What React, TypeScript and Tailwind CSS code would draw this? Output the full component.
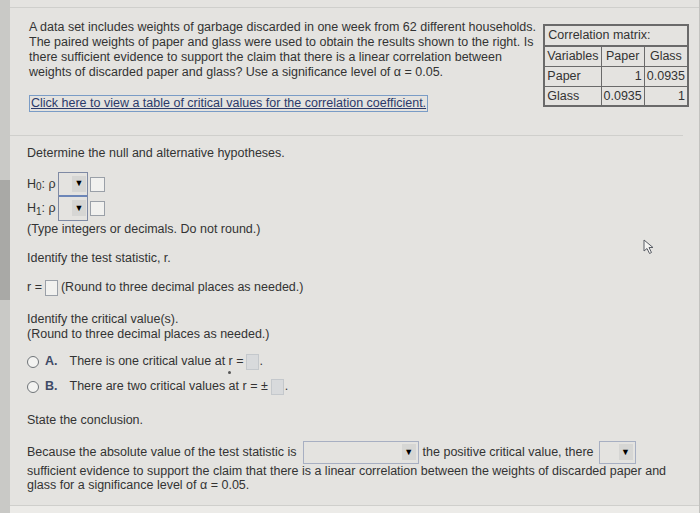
import React from 'react';

function Arrow() {
  return (
    <span className="flex h-full w-[14px] items-center justify-center bg-[#d6d6d4] text-[9px] leading-none text-black">
      ▼
    </span>
  );
}

function Blank({ className = '' }: { className?: string }) {
  return <span className={`inline-block border border-[#9aa0a8] bg-[#f1f1ef] ${className}`} />;
}

function Radio({ letter, children }: { letter: string; children: React.ReactNode }) {
  return (
    <div className="flex items-center">
      <span className="mr-[6px] inline-block h-[12px] w-[12px] rounded-full border border-[#6f7478] bg-[#f3f3f1]" />
      <span className="mr-[12px] font-bold text-[#3f4a66]">{letter}.</span>
      {children}
    </div>
  );
}

function Hyp({ n }: { n: string }) {
  return (
    <span className="whitespace-nowrap">
      H<sub className="text-[10px]">{n}</sub>: ρ
    </span>
  );
}

export default function App() {
  return (
    <div
      className="flex h-[513px] w-[700px] overflow-hidden bg-[#e4e3e0] text-[12.5px] text-[#333]"
      style={{ fontFamily: '"Liberation Sans", Arial, sans-serif' }}
    >
      {/* left edge of the screen */}
      <div className="flex w-[10px] flex-col bg-[#c9c9c6]">
        <div className="mt-[180px] h-[120px] bg-[#a9a9a6]" />
      </div>

      <div className="flex flex-1 flex-col border-r border-[#c2c2bf]">
        <div className="mt-[7px] border-t border-[#cfcfcc]" />

        {/* problem statement */}
        <div className="flex pl-[19px] pr-[10px] pt-[12px]">
          <div className="w-[510px]">
            <p className="leading-[15px]">
              A data set includes weights of garbage discarded in one week from 62 different households.
              The paired weights of paper and glass were used to obtain the results shown to the right. Is
              there sufficient evidence to support the claim that there is a linear correlation between
              weights of discarded paper and glass? Use a significance level of α = 0.05.
            </p>
            <div className="mt-[15px] inline-block border border-[#7a9cc6] px-[1px] leading-[15px] text-[#2b3a6a] underline">
              Click here to view a table of critical values for the correlation coefficient.
            </div>
          </div>

          <table className="ml-auto mt-[4px] h-[80px] border-collapse border-2 border-[#6a6a6a] text-[12.5px]">
            <tbody>
              <tr className="h-[20px]">
                <td colSpan={3} className="border-2 border-[#6a6a6a] px-[3px]">Correlation matrix:</td>
              </tr>
              <tr className="h-[20px]">
                <td className="w-[55px] border border-[#6a6a6a] px-[2px]">Variables</td>
                <td className="w-[43px] border border-[#6a6a6a] px-[2px] text-center">Paper</td>
                <td className="w-[42px] border border-[#6a6a6a] px-[2px] text-center">Glass</td>
              </tr>
              <tr className="h-[20px]">
                <td className="border border-[#6a6a6a] px-[2px]">Paper</td>
                <td className="border border-[#6a6a6a] px-[2px] text-right">1</td>
                <td className="border border-[#6a6a6a] px-[2px]">0.0935</td>
              </tr>
              <tr className="h-[19px]">
                <td className="border border-[#6a6a6a] px-[2px]">Glass</td>
                <td className="border border-[#6a6a6a] px-[2px]">0.0935</td>
                <td className="border border-[#6a6a6a] px-[2px] text-right">1</td>
              </tr>
            </tbody>
          </table>
        </div>

        <div className="mr-[16px] mt-[22px] border-t border-[#cfcfcc]" />

        {/* answer area */}
        <div className="relative flex flex-col pl-[17px] pt-[10px] leading-[15px]">
          <p>Determine the null and alternative hypotheses.</p>

          <div className="mt-[11px] flex">
            <div className="flex w-[31px] flex-col">
              <div className="flex h-[25px] items-center"><Hyp n="0" /></div>
              <div className="flex h-[24px] items-center"><Hyp n="1" /></div>
            </div>
            <div className="flex w-[30px] flex-col border border-[#7f8aa4]">
              <div className="flex h-[24px] items-center justify-end border-b-2 border-[#6c86b8] pr-[1px]">
                <span className="h-[16px]"><Arrow /></span>
              </div>
              <div className="flex h-[23px] items-center justify-end pr-[1px]">
                <span className="h-[16px]"><Arrow /></span>
              </div>
            </div>
            <div className="ml-[2px] flex flex-col">
              <div className="flex h-[25px] items-center"><Blank className="h-[15px] w-[15px]" /></div>
              <div className="flex h-[24px] items-center"><Blank className="h-[15px] w-[15px]" /></div>
            </div>
          </div>

          <p className="mt-[1px]">(Type integers or decimals. Do not round.)</p>

          <p className="mt-[14px]">Identify the test statistic, r.</p>

          <div className="mt-[14px] flex items-center">
            <span>r =</span>
            <Blank className="ml-[3px] h-[16px] w-[13px]" />
            <span className="ml-[3px]">(Round to three decimal places as needed.)</span>
          </div>

          <p className="mt-[16px]">Identify the critical value(s).</p>
          <p>(Round to three decimal places as needed.)</p>

          <div className="mt-[12px] flex flex-col gap-[9px]">
            <Radio letter="A">
              <span>There is one critical value at r =</span>
              <span className="ml-[2px] inline-block h-[16px] w-[13px] border border-[#c4c8cc] bg-[#d8dadc]" />
              <span className="ml-[1px]">.</span>
            </Radio>
            <Radio letter="B">
              <span>There are two critical values at r = ±</span>
              <span className="ml-[3px] inline-block h-[16px] w-[13px] border border-[#c4c8cc] bg-[#d8dadc]" />
              <span className="ml-[1px]">.</span>
            </Radio>
          </div>

          <p className="mt-[18px]">State the conclusion.</p>

          <div className="mt-[13px] flex items-center">
            <span>Because the absolute value of the test statistic is</span>
            <span className="ml-[6px] flex h-[23px] w-[116px] items-center justify-end border border-[#a7afc2] pr-[2px]">
              <span className="h-[16px]"><Arrow /></span>
            </span>
            <span className="ml-[4px]">the positive critical value, there</span>
            <span className="ml-[5px] flex h-[23px] w-[37px] items-center justify-end border border-[#a7afc2] pr-[2px]">
              <span className="h-[16px]"><Arrow /></span>
            </span>
          </div>
          <p className="w-[650px] leading-[14px]">
            sufficient evidence to support the claim that there is a linear correlation between the weights of discarded paper and
            glass for a significance level of α = 0.05.
          </p>

          {/* stray dot on the screen */}
          <span className="absolute left-[218px] top-[235px] h-[3px] w-[3px] rounded-full bg-[#555]" />

          {/* mouse pointer */}
          <svg className="absolute left-[633px] top-[103px]" width="12" height="16" viewBox="0 0 12 16">
            <path d="M1 1 L1 12 L4 9.5 L6.5 14.5 L8.5 13.5 L6 8.5 L10 8.5 Z" fill="#f4f4f2" stroke="#5a5e66" strokeWidth="1" />
          </svg>
        </div>

        <div className="flex-1" />
        <div className="h-[8px] border-t border-[#cfcfcc] bg-[#ecebe8]" />
      </div>
    </div>
  );
}
